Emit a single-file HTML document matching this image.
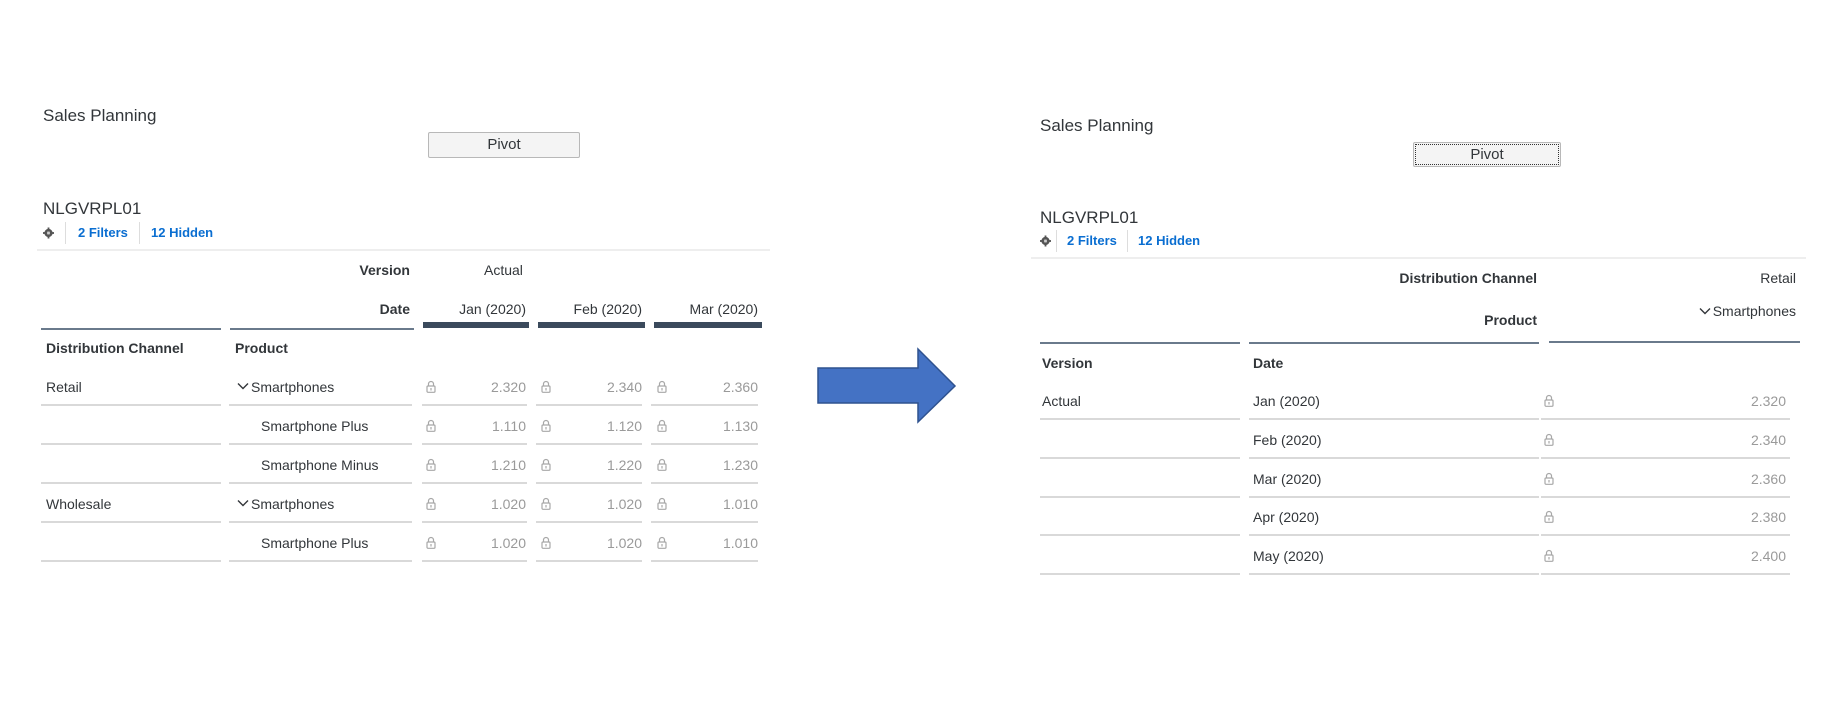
<!DOCTYPE html>
<html><head><meta charset="utf-8"><style>
body{margin:0;width:1847px;height:702px;background:#fff;position:relative;overflow:hidden;font-family:"Liberation Sans",sans-serif;color:#32363a}
.a{position:absolute;white-space:nowrap;line-height:18px;font-size:14px}
.r{text-align:right}
.b{font-weight:bold}
.v{color:#9a9a9a}
.ln{position:absolute;height:2px;background:#d9d9d9}
.hl{position:absolute;height:2px;background:#6a7a8c}
.bar{position:absolute;height:6px;background:#3b4a5c}
.blue{color:#0a6ed1;font-weight:bold;font-size:13px}
.lock{position:absolute;width:10px;height:13px}
.btn{position:absolute;background:#f4f4f4;border:1px solid #b8b8b8;border-radius:2px;font-size:15px;text-align:center;color:#32363a}
.sep{position:absolute;width:1px;height:22px;background:#ddd}
</style></head><body>
<svg width="0" height="0" style="position:absolute"><defs><symbol id="lk" viewBox="0 0 10 13"><path d="M2.5 6V4a2.5 2.5 0 0 1 5 0v2" fill="none" stroke="#a8a8a8" stroke-width="1.2"/><rect x="1" y="6" width="8" height="6.3" rx="1" fill="none" stroke="#a8a8a8" stroke-width="1.2"/><rect x="4.4" y="8" width="1.2" height="2.5" fill="#a8a8a8"/></symbol>
<symbol id="gear" viewBox="0 0 12 12"><circle cx="6" cy="6" r="4.5" fill="#555"/><circle cx="6" cy="6" r="1.8" fill="#fff"/><rect x="5" y="0" width="2" height="12" fill="#555"/><rect x="0" y="5" width="12" height="2" fill="#555"/><circle cx="6" cy="6" r="1.6" fill="#ccc"/></symbol>
<symbol id="chev" viewBox="0 0 12 8"><path d="M1 1.5l5 5 5-5" fill="none" stroke="#32363a" stroke-width="1.4"/></symbol></defs></svg>

<!-- LEFT -->
<div class="a" style="left:43px;top:107px;font-size:17px">Sales Planning</div>
<div class="btn" style="left:428px;top:132px;width:150px;height:24px;line-height:24px">Pivot</div>
<div class="a" style="left:43px;top:200px;font-size:17px">NLGVRPL01</div>
<svg style="position:absolute;left:43px;top:227px" width="11" height="12"><use href="#gear"/></svg>
<div class="sep" style="left:65px;top:222px"></div>
<div class="a blue" style="left:78px;top:224px">2 Filters</div>
<div class="sep" style="left:139px;top:222px"></div>
<div class="a blue" style="left:151px;top:224px">12 Hidden</div>
<div class="ln" style="left:37px;top:249px;width:733px;background:#eee"></div>

<div class="a b r" style="left:300px;width:110px;top:261px">Version</div>
<div class="a" style="left:484px;top:261px">Actual</div>
<div class="a b r" style="left:300px;width:110px;top:300px">Date</div>
<div class="a r" style="left:430px;width:96px;top:300px">Jan (2020)</div>
<div class="a r" style="left:546px;width:96px;top:300px">Feb (2020)</div>
<div class="a r" style="left:662px;width:96px;top:300px">Mar (2020)</div>
<div class="hl" style="left:41px;top:328px;width:180px"></div>
<div class="hl" style="left:230px;top:328px;width:184px"></div>
<div class="bar" style="left:423px;top:322px;width:106px"></div>
<div class="bar" style="left:538px;top:322px;width:107px"></div>
<div class="bar" style="left:654px;top:322px;width:108px"></div>
<div class="a b" style="left:46px;top:339px">Distribution Channel</div>
<div class="a b" style="left:235px;top:339px">Product</div>

<div class="a" style="left:46px;top:378px">Retail</div>
<div class="a" style="left:46px;top:495px">Wholesale</div>
<svg style="position:absolute;left:237px;top:382px" width="12" height="8"><use href="#chev"/></svg>
<div class="a" style="left:251px;top:378px">Smartphones</div>
<div class="a" style="left:261px;top:417px">Smartphone Plus</div>
<div class="a" style="left:261px;top:456px">Smartphone Minus</div>
<svg style="position:absolute;left:237px;top:499px" width="12" height="8"><use href="#chev"/></svg>
<div class="a" style="left:251px;top:495px">Smartphones</div>
<div class="a" style="left:261px;top:534px">Smartphone Plus</div>

<div class="ln" style="left:41px;top:404px;width:180px"></div><div class="ln" style="left:229px;top:404px;width:183px"></div><div class="ln" style="left:422px;top:404px;width:105px"></div><div class="ln" style="left:536px;top:404px;width:106px"></div><div class="ln" style="left:651px;top:404px;width:107px"></div>
<div class="ln" style="left:41px;top:443px;width:180px"></div><div class="ln" style="left:229px;top:443px;width:183px"></div><div class="ln" style="left:422px;top:443px;width:105px"></div><div class="ln" style="left:536px;top:443px;width:106px"></div><div class="ln" style="left:651px;top:443px;width:107px"></div>
<div class="ln" style="left:41px;top:482px;width:180px"></div><div class="ln" style="left:229px;top:482px;width:183px"></div><div class="ln" style="left:422px;top:482px;width:105px"></div><div class="ln" style="left:536px;top:482px;width:106px"></div><div class="ln" style="left:651px;top:482px;width:107px"></div>
<div class="ln" style="left:41px;top:521px;width:180px"></div><div class="ln" style="left:229px;top:521px;width:183px"></div><div class="ln" style="left:422px;top:521px;width:105px"></div><div class="ln" style="left:536px;top:521px;width:106px"></div><div class="ln" style="left:651px;top:521px;width:107px"></div>
<div class="ln" style="left:41px;top:560px;width:180px"></div><div class="ln" style="left:229px;top:560px;width:183px"></div><div class="ln" style="left:422px;top:560px;width:105px"></div><div class="ln" style="left:536px;top:560px;width:106px"></div><div class="ln" style="left:651px;top:560px;width:107px"></div>

<!-- left values -->
<svg class="lock" style="left:426px;top:380px"><use href="#lk"/></svg><div class="a r v" style="left:450px;width:76px;top:378px">2.320</div>
<svg class="lock" style="left:541px;top:380px"><use href="#lk"/></svg><div class="a r v" style="left:566px;width:76px;top:378px">2.340</div>
<svg class="lock" style="left:657px;top:380px"><use href="#lk"/></svg><div class="a r v" style="left:682px;width:76px;top:378px">2.360</div>
<svg class="lock" style="left:426px;top:419px"><use href="#lk"/></svg><div class="a r v" style="left:450px;width:76px;top:417px">1.110</div>
<svg class="lock" style="left:541px;top:419px"><use href="#lk"/></svg><div class="a r v" style="left:566px;width:76px;top:417px">1.120</div>
<svg class="lock" style="left:657px;top:419px"><use href="#lk"/></svg><div class="a r v" style="left:682px;width:76px;top:417px">1.130</div>
<svg class="lock" style="left:426px;top:458px"><use href="#lk"/></svg><div class="a r v" style="left:450px;width:76px;top:456px">1.210</div>
<svg class="lock" style="left:541px;top:458px"><use href="#lk"/></svg><div class="a r v" style="left:566px;width:76px;top:456px">1.220</div>
<svg class="lock" style="left:657px;top:458px"><use href="#lk"/></svg><div class="a r v" style="left:682px;width:76px;top:456px">1.230</div>
<svg class="lock" style="left:426px;top:497px"><use href="#lk"/></svg><div class="a r v" style="left:450px;width:76px;top:495px">1.020</div>
<svg class="lock" style="left:541px;top:497px"><use href="#lk"/></svg><div class="a r v" style="left:566px;width:76px;top:495px">1.020</div>
<svg class="lock" style="left:657px;top:497px"><use href="#lk"/></svg><div class="a r v" style="left:682px;width:76px;top:495px">1.010</div>
<svg class="lock" style="left:426px;top:536px"><use href="#lk"/></svg><div class="a r v" style="left:450px;width:76px;top:534px">1.020</div>
<svg class="lock" style="left:541px;top:536px"><use href="#lk"/></svg><div class="a r v" style="left:566px;width:76px;top:534px">1.020</div>
<svg class="lock" style="left:657px;top:536px"><use href="#lk"/></svg><div class="a r v" style="left:682px;width:76px;top:534px">1.010</div>

<!-- ARROW -->
<svg style="position:absolute;left:810px;top:340px" width="160" height="90"><path d="M8 28H108V9L145 46L108 82V63H8Z" fill="#4472c4" stroke="#2f528f" stroke-width="1.5"/></svg>

<!-- RIGHT -->
<div class="a" style="left:1040px;top:117px;font-size:17px">Sales Planning</div>
<div class="btn" style="left:1413px;top:142px;width:146px;height:23px;line-height:23px;outline:1px dotted #333;outline-offset:-3px">Pivot</div>
<div class="a" style="left:1040px;top:209px;font-size:17px">NLGVRPL01</div>
<svg style="position:absolute;left:1040px;top:235px" width="11" height="12"><use href="#gear"/></svg>
<div class="sep" style="left:1056px;top:230px"></div>
<div class="a blue" style="left:1067px;top:232px">2 Filters</div>
<div class="sep" style="left:1127px;top:230px"></div>
<div class="a blue" style="left:1138px;top:232px">12 Hidden</div>
<div class="ln" style="left:1031px;top:257px;width:775px;background:#eee"></div>

<div class="a b r" style="left:1300px;width:237px;top:269px">Distribution Channel</div>
<div class="a r" style="left:1700px;width:96px;top:269px">Retail</div>
<div class="a b r" style="left:1400px;width:137px;top:311px">Product</div>
<div class="a" style="right:51px;top:302px;display:flex;align-items:center"><svg width="12" height="8" style="margin-right:2px"><use href="#chev"/></svg>Smartphones</div>
<div class="hl" style="left:1040px;top:342px;width:200px"></div>
<div class="hl" style="left:1249px;top:342px;width:290px"></div>
<div class="hl" style="left:1549px;top:341px;width:251px"></div>
<div class="a b" style="left:1042px;top:354px">Version</div>
<div class="a b" style="left:1253px;top:354px">Date</div>

<div class="a" style="left:1042px;top:392px">Actual</div>
<div class="a" style="left:1253px;top:392px">Jan (2020)</div>
<div class="a" style="left:1253px;top:431px">Feb (2020)</div>
<div class="a" style="left:1253px;top:470px">Mar (2020)</div>
<div class="a" style="left:1253px;top:508px">Apr (2020)</div>
<div class="a" style="left:1253px;top:547px">May (2020)</div>

<div class="ln" style="left:1040px;top:418px;width:200px"></div><div class="ln" style="left:1249px;top:418px;width:290px"></div><div class="ln" style="left:1541px;top:418px;width:249px"></div>
<div class="ln" style="left:1040px;top:457px;width:200px"></div><div class="ln" style="left:1249px;top:457px;width:290px"></div><div class="ln" style="left:1541px;top:457px;width:249px"></div>
<div class="ln" style="left:1040px;top:496px;width:200px"></div><div class="ln" style="left:1249px;top:496px;width:290px"></div><div class="ln" style="left:1541px;top:496px;width:249px"></div>
<div class="ln" style="left:1040px;top:534px;width:200px"></div><div class="ln" style="left:1249px;top:534px;width:290px"></div><div class="ln" style="left:1541px;top:534px;width:249px"></div>
<div class="ln" style="left:1040px;top:573px;width:200px"></div><div class="ln" style="left:1249px;top:573px;width:290px"></div><div class="ln" style="left:1541px;top:573px;width:249px"></div>

<svg class="lock" style="left:1544px;top:394px"><use href="#lk"/></svg><div class="a r v" style="left:1700px;width:86px;top:392px">2.320</div>
<svg class="lock" style="left:1544px;top:433px"><use href="#lk"/></svg><div class="a r v" style="left:1700px;width:86px;top:431px">2.340</div>
<svg class="lock" style="left:1544px;top:472px"><use href="#lk"/></svg><div class="a r v" style="left:1700px;width:86px;top:470px">2.360</div>
<svg class="lock" style="left:1544px;top:510px"><use href="#lk"/></svg><div class="a r v" style="left:1700px;width:86px;top:508px">2.380</div>
<svg class="lock" style="left:1544px;top:549px"><use href="#lk"/></svg><div class="a r v" style="left:1700px;width:86px;top:547px">2.400</div>
</body></html>
